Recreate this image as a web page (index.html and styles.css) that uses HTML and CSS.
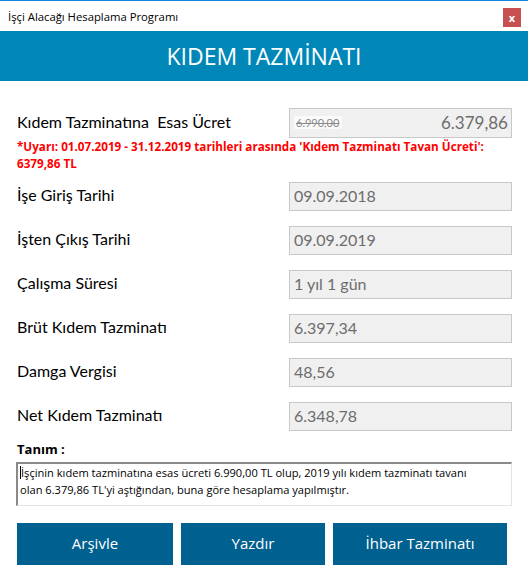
FILE: index.html
```html
<!DOCTYPE html>
<html lang="tr">

<head>
  <meta charset="UTF-8">
  <meta name="viewport" content="width=device-width, initial-scale=1.0">
  <title>İşçi Alacağı Hesaplama Programı</title>
  <link rel="stylesheet" href="styles.css">
</head>

<body>
  <div class="window">
    <div class="titlebar">
      <span class="app-name">İşçi Alacağı Hesaplama Programı</span>
      <span class="close">x</span>
    </div>

    <div class="header">KIDEM TAZMİNATI</div>

    <div class="form">
      <div class="row first">
        <div class="label">Kıdem Tazminatına&nbsp; Esas Ücret</div>
        <div class="field split">
          <span class="old">6.990,00</span>
          <span class="big">6.379,86</span>
        </div>
      </div>
      <p class="warning">*Uyarı: 01.07.2019 - 31.12.2019 tarihleri arasında 'Kıdem Tazminatı Tavan Ücreti':<br>6379,86 TL</p>

      <div class="row">
        <div class="label">İşe Giriş Tarihi</div>
        <div class="field">09.09.2018</div>
      </div>
      <div class="row">
        <div class="label">İşten Çıkış Tarihi</div>
        <div class="field">09.09.2019</div>
      </div>
      <div class="row">
        <div class="label">Çalışma Süresi</div>
        <div class="field">1 yıl 1 gün</div>
      </div>
      <div class="row">
        <div class="label">Brüt Kıdem Tazminatı</div>
        <div class="field">6.397,34</div>
      </div>
      <div class="row">
        <div class="label">Damga Vergisi</div>
        <div class="field">48,56</div>
      </div>
      <div class="row last">
        <div class="label">Net Kıdem Tazminatı</div>
        <div class="field">6.348,78</div>
      </div>

      <div class="desc-title">Tanım :</div>
      <div class="desc"><span class="caret"></span>İşçinin kıdem tazminatına esas ücreti 6.990,00 TL olup, 2019 yılı kıdem tazminatı tavanı olan 6.379,86 TL'yi aştığından, buna göre hesaplama yapılmıştır.</div>

      <div class="buttons">
        <a href="javascript:void(0);" class="btn">Arşivle</a>
        <a href="javascript:void(0);" class="btn">Yazdır</a>
        <a href="javascript:void(0);" class="btn">İhbar Tazminatı</a>
      </div>
    </div>
  </div>
</body>

</html>
```

FILE: styles.css
```css
body {
  margin: 0;
  background: #fff;
  font-family: "Open Sans", sans-serif;
}

.window {
  width: 528px;
  height: 577px;
  border-top: 1px solid #1883d7;
  box-sizing: border-box;
}

/* başlık çubuğu */
.titlebar {
  height: 30px;
  display: flex;
  align-items: center;
  justify-content: space-between;
  padding: 0 7px 0 8px;
}

.app-name {
  font-size: 11.3px;
  color: #000;
}

.close {
  width: 18px;
  height: 19px;
  margin-top: 2px;
  background: #c75050;
  color: #fff;
  font-size: 11px;
  font-weight: 700;
  display: flex;
  align-items: center;
  justify-content: center;
  line-height: 1;
}

.header {
  height: 50px;
  background: #0087b8;
  color: #fff;
  display: flex;
  align-items: center;
  justify-content: center;
  font-size: 23px;
}

.form {
  padding: 27px 16px 0 17px;
}

.row {
  display: grid;
  grid-template-columns: 272px 223px;
  align-items: center;
  height: 29px;
  margin-bottom: 15px;
}

.row.first {
  height: 30px;
  margin-bottom: 0;
}

.row.last {
  margin-bottom: 0;
}

.label {
  font-family: Lato, sans-serif;
  font-size: 16px;
  line-height: 1;
  padding-bottom: 3px;
  color: #000;
}

.field {
  height: 100%;
  box-sizing: border-box;
  background: #f0f0f0;
  border: 1px solid #c8c8c8;
  padding: 0 4px 2px;
  display: flex;
  align-items: center;
  font-family: Lato, sans-serif;
  font-size: 16px;
  color: #6d6d6d;
}

.field.split {
  justify-content: space-between;
  padding: 0 3px 1px 4px;
}

.old {
  background: #fafafa;
  font-size: 11px;
  color: #8a8a8a;
  text-decoration: line-through;
  padding: 0 3px 0 2px;
  line-height: 13px;
}

.big {
  font-size: 17px;
}

.warning {
  margin: 0 0 10px;
  color: #ff0000;
  font-weight: 700;
  font-size: 11.7px;
  line-height: 17px;
}

.desc-title {
  margin-top: 10px;
  font-weight: 700;
  font-size: 13px;
  line-height: 16px;
  color: #000;
}

.desc {
  margin: 5px 0 0 -1px;
  width: 496px;
  height: 44px;
  box-sizing: border-box;
  border-top: 2px solid #8a8a8a;
  border-left: 2px solid #8a8a8a;
  border-right: 1px solid #e3e3e3;
  border-bottom: 1px solid #e3e3e3;
  padding: 0 28px 0 2px;
  font-size: 11.1px;
  line-height: 17px;
  color: #000;
}

.caret {
  display: inline-block;
  width: 1px;
  height: 13px;
  background: #000;
  vertical-align: -2px;
}

.buttons {
  display: grid;
  grid-template-columns: 156px 144px 174px;
  column-gap: 8px;
  margin-top: 17px;
}

.btn {
  height: 42px;
  padding-bottom: 2px;
  box-sizing: border-box;
  background: #00608f;
  color: #fff;
  text-decoration: none;
  display: flex;
  align-items: center;
  justify-content: center;
  font-size: 15px;
}
```
